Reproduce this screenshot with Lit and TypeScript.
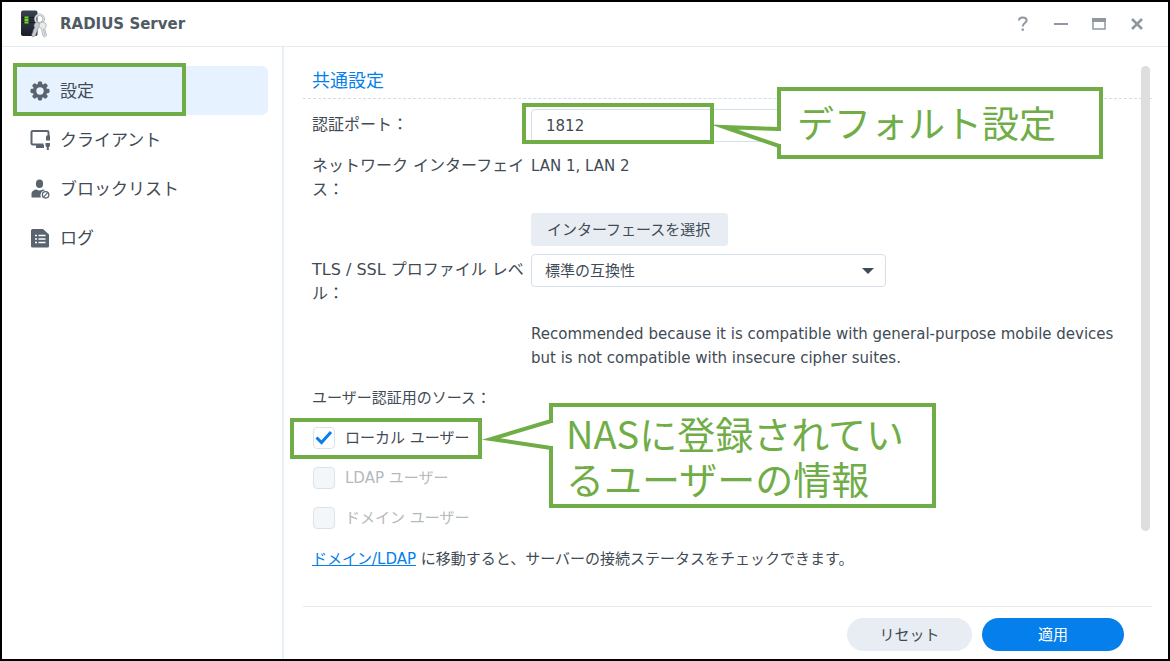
import { LitElement, html, css, svg } from "lit";
import { customElement, property, state } from "lit/decorators.js";
import { classMap } from "lit/directives/class-map.js";

const icons = {
  gear: svg`<svg viewBox="0 0 20 20" width="20" height="20" aria-hidden="true">
    <g fill="#5a646e">
      <rect x="7.8" y="0.5" width="4.4" height="19" rx="1.4"/>
      <rect x="7.8" y="0.5" width="4.4" height="19" rx="1.4" transform="rotate(45 10 10)"/>
      <rect x="7.8" y="0.5" width="4.4" height="19" rx="1.4" transform="rotate(90 10 10)"/>
      <rect x="7.8" y="0.5" width="4.4" height="19" rx="1.4" transform="rotate(135 10 10)"/>
      <circle cx="10" cy="10" r="7.2"/>
    </g>
    <circle cx="10" cy="10" r="3.7" fill="#e6f2ff"/>
  </svg>`,
  client: svg`<svg viewBox="0 0 20 20" width="20" height="20" aria-hidden="true">
    <path d="M13.500 14.500H2.800a1.300 1.300 0 0 1-1.300-1.300V2.300A1.300 1.300 0 0 1 2.800 1h14.400a1.300 1.300 0 0 1 1.300 1.300V6" fill="none" stroke="#5a646e" stroke-width="2"/>
    <path d="M6 15h8v3H6zM16.500 5.500H20v5h-4V7zM15.500 13h4.500v3l-1.200 1.200V20h-2v-2.800L15.500 16z" fill="#5a646e"/>
  </svg>`,
  block: svg`<svg viewBox="0 0 20 20" width="20" height="20" aria-hidden="true">
    <ellipse cx="9.500" cy="4.800" rx="3.600" ry="4.300" fill="#5a646e"/>
    <path d="M1.500 18.500v-3.500c0-3 3-4.500 5-4.500 1.800 1.200 4.400 1.200 6 0 1 .1 1.900.4 2.700.8a5 5 0 0 0-4.300 7.200z" fill="#5a646e"/>
    <circle cx="15.600" cy="15.800" r="3.200" fill="none" stroke="#5a646e" stroke-width="1.300"/>
    <path d="M13.600 17.800l4-4" stroke="#5a646e" stroke-width="1.200"/>
  </svg>`,
  log: svg`<svg viewBox="0 0 20 20" width="20" height="20" aria-hidden="true">
    <path d="M2.500 1h10.500l6 5.500v11.500a1.500 1.500 0 0 1-1.500 1.500h-15A1.500 1.500 0 0 1 1 18V2.500A1.500 1.500 0 0 1 2.500 1z" fill="#5a646e"/>
    <path d="M5 7.500h2M5 11h2M5 14.500h2M8.500 7.500h7M8.500 11h7M8.500 14.500h7" stroke="#fff" stroke-width="1.400"/>
  </svg>`,
};

const appIcon = svg`<svg viewBox="0 0 28 28" width="28" height="28" aria-hidden="true">
  <defs>
    <linearGradient id="case" x1="0" y1="0" x2="0" y2="1">
      <stop offset="0" stop-color="#3a4150"/><stop offset="1" stop-color="#191e29"/>
    </linearGradient>
  </defs>
  <rect x="1" y="0.500" width="16.500" height="25.500" rx="2" fill="url(#case)"/>
  <path d="M2 7.500h14.500M2 10h14.500M2 12.500h14.500" stroke="#171b24"/>
  <path d="M4.500 7.500h4M4.500 10h4M4.500 12.500h4" stroke="#6fdc25" stroke-width="2"/>
  <circle cx="19.500" cy="9" r="4.200" fill="none" stroke="#9a9fa4" stroke-width="2.400"/>
  <circle cx="19.500" cy="9" r="4.200" fill="none" stroke="#dcdee0" stroke-width="1.400"/>
  <path d="M15 13.200c1.500-1.500 4.500-1 5 1 .4 1.800-.5 3-1.600 3.600L15.200 26l-2.700.8-.7-2.300 1-2 .4-2 1.500-3c-.9-1.200-.8-3 .3-4.300z" fill="#c9ccd0" stroke="#858b91" stroke-width=".6"/>
  <path d="M20.800 12.500c2-1 4.800-.2 5.300 2 .4 1.600-.3 3-1.300 3.800l1.700 7.200-1.900 1.600-1.600-1.300-1.600-7.300c-1.600-.4-2.400-1.600-2.300-3.200.1-1.200.7-2.200 1.700-2.800z" fill="#e9eaec" stroke="#8d9298" stroke-width=".6"/>
  <path d="M23.300 18.500l1.500 7" stroke="#a9aeb3" stroke-width=".8"/>
</svg>`;

@customElement("callout-note")
class CalloutNote extends LitElement {
  @property({ type: Number }) tipX = 0;
  @property({ type: Number }) tipY = 0;
  @property({ type: Number }) topY = 0;
  @property({ type: Number }) bottomY = 0;

  static styles = css`
    :host {
      display: block;
      box-sizing: border-box;
      border: 4px solid #70ad47;
      background: #fff;
      color: #70ad47;
      font-family: "Noto Sans CJK JP", sans-serif;
      line-height: 45px;
    }
    .tail {
      position: absolute;
      left: -72px;
      top: -4px;
      width: 72px;
      height: 100px;
      overflow: visible;
    }
    .fill { fill: #fff; }
    .edge { fill: none; stroke: #70ad47; stroke-width: 4; }
  `;

  render() {
    const { tipX, tipY, topY, bottomY } = this;
    return html`
      <svg class="tail" aria-hidden="true">
        <polygon class="fill" points="73,${topY} 73,${bottomY} ${tipX},${tipY}"></polygon>
        <polyline class="edge" stroke-miterlimit="12" points="72,${topY} 70,${topY} ${tipX},${tipY} 70,${bottomY} 72,${bottomY}"></polyline>
      </svg>
      <slot></slot>
    `;
  }
}

@customElement("app-root")
class AppRoot extends LitElement {
  @state() private active = "settings";

  private nav = [
    { id: "settings", label: "設定", icon: icons.gear },
    { id: "clients", label: "クライアント", icon: icons.client },
    { id: "block", label: "ブロックリスト", icon: icons.block },
    { id: "log", label: "ログ", icon: icons.log },
  ];

  private sources = [
    { id: "local", label: "ローカル ユーザー", on: true },
    { id: "ldap", label: "LDAP ユーザー", on: false },
    { id: "domain", label: "ドメイン ユーザー", on: false },
  ];

  static styles = css`
    :host {
      display: block;
      font: 15px/24px "DejaVu Sans", "Noto Sans CJK JP", sans-serif;
      color: #414b55;
    }
    * { box-sizing: border-box; }
    button, input, select { font: inherit; color: inherit; margin: 0; }
    .window {
      display: grid;
      grid-template: auto 1fr / 282px minmax(0, 1fr);
      min-height: 100vh;
      border: 2px solid #000;
      background: #fff;
    }
    .titlebar {
      grid-column: 1 / -1;
      display: flex;
      align-items: center;
      height: 45px;
      padding: 0 17px 0 18px;
      border-bottom: 1px solid #e3eaf0;
    }
    .title { flex: 1; margin: 0 0 0 12px; font-size: 15px; font-weight: bold; color: #505a64; }
    .controls { display: flex; gap: 10px; }
    .control {
      display: grid;
      place-items: center;
      width: 28px;
      height: 28px;
      padding: 0;
      border: 0;
      background: none;
      color: #8f98a1;
    }
    .sidebar { padding: 19px 14px 0 11px; border-right: 2px solid #e8eff5; }
    .nav-item {
      position: relative;
      display: flex;
      align-items: center;
      gap: 10px;
      width: 100%;
      height: 49px;
      padding: 0 17px;
      border: 0;
      border-radius: 6px;
      background: none;
      font-size: 17px;
      text-align: left;
    }
    .nav-item.active { background: #e6f2ff; }
    .ring { position: absolute; border: 4px solid #70ad47; pointer-events: none; }
    .ring-nav { left: 0; top: -3px; width: 173px; height: 53px; }
    .ring-port { left: -9px; top: -6px; width: 192px; height: 41px; }
    .ring-local { left: -23px; top: -8px; width: 192px; height: 41px; }
    .panel { display: flex; flex-direction: column; padding: 19px 16px 0 19px; }
    .body { position: relative; flex: 1; }
    .thumb {
      position: absolute;
      right: 2px;
      top: 0;
      width: 9px;
      height: 465px;
      border-radius: 5px;
      background: #dedede;
    }
    .heading {
      margin: 0 0 10px;
      padding: 3px 9px 5px;
      border-bottom: 1px dashed #cfdde9;
      font-size: 18px;
      font-weight: normal;
      color: #057feb;
    }
    .form { padding: 0 26px 0 9px; }
    .row {
      display: grid;
      grid-template-columns: 219px minmax(0, 1fr);
      align-items: start;
    }
    .row-network { margin-top: 12px; }
    .row-tls { margin-top: 8px; }
    .label { padding: 4px 0; font-size: 16px; }
    .row-network .label { padding: 0 0 11px; }
    .field { position: relative; width: 355px; }
    .input, .select {
      display: block;
      width: 100%;
      height: 33px;
      padding: 0 14px;
      border: 1px solid #d5e0ea;
      border-radius: 4px;
      background: #fff;
      appearance: none;
      outline: none;
    }
    .select { padding: 0 13px; }
    .arrow { position: absolute; right: 12px; top: 14px; pointer-events: none; }
    .pick {
      grid-column: 2;
      justify-self: start;
      height: 33px;
      padding: 0 18px 0 16px;
      border: 0;
      border-radius: 3px;
      background: #e8edf3;
    }
    .hint { grid-column: 2; margin: 12px 0 0; }
    .sources { margin: 16px 0 0; padding: 0; border: 0; }
    .legend { padding: 0; }
    .check {
      position: relative;
      display: flex;
      width: max-content;
      align-items: center;
      gap: 10px;
      height: 24px;
      margin: 16px 0 0 1px;
    }
    .check.off { color: #b4b9be; }
    .box {
      display: grid;
      place-items: center;
      appearance: none;
      width: 22px;
      height: 22px;
      border: 1px solid #d9e3ed;
      border-radius: 4px;
      background: #fff;
    }
    .box:disabled { background: #f4f7fa; }
    .tick { position: absolute; left: 2px; top: 4px; pointer-events: none; }
    .note { margin: 17px 0 0; }
    .link { color: #057feb; text-decoration: underline; }
    .callout { position: absolute; z-index: 2; }
    .callout-port { left: 246px; top: -22px; width: 326px; height: 72px; padding: 9px 16px; font-size: 37px; }
    .callout-local { left: 236px; top: -23px; width: 387px; height: 105px; padding: 3px 13px; font-size: 38px; }
    .footer {
      display: flex;
      justify-content: flex-end;
      gap: 10px;
      padding: 11px 28px 8px 0;
      border-top: 1px solid #e3eaf0;
    }
    .pill { height: 33px; border: 0; border-radius: 17px; }
    .reset { width: 125px; background: #e8edf3; }
    .apply { width: 142px; background: #057feb; color: #fff; }
  `;

  render() {
    return html`
      <div class="window">
        <header class="titlebar">
          ${appIcon}
          <h1 class="title">RADIUS Server</h1>
          <div class="controls">
            <button class="control" aria-label="ヘルプ">
              <svg width="12" height="16" viewBox="0 0 12 16"><path d="M2 4.500C2 2.500 3.700 1.500 5.700 1.500S9.600 2.600 9.600 4.500C9.600 7 5.700 7.200 5.700 10.500" fill="none" stroke="currentColor" stroke-width="2"/><path d="M4.600 12.500h2.300v2.300H4.600z" fill="currentColor"/></svg>
            </button>
            <button class="control" aria-label="最小化">
              <svg width="14" height="14"><path d="M0 7h14" stroke="currentColor" stroke-width="2"/></svg>
            </button>
            <button class="control" aria-label="最大化">
              <svg width="14" height="12"><path d="M1 1h12v10H1z" fill="none" stroke="currentColor" stroke-width="1.500"/><path d="M0 0h14v4H0z" fill="currentColor"/></svg>
            </button>
            <button class="control" aria-label="閉じる">
              <svg width="12" height="12"><path d="M1 1l10 10M11 1L1 11" stroke="currentColor" stroke-width="2.600"/></svg>
            </button>
          </div>
        </header>

        <nav class="sidebar">
          ${this.nav.map(
            (n) => html`<button
              class=${classMap({ "nav-item": true, active: n.id === this.active })}
              @click=${() => (this.active = n.id)}
            >
              ${n.icon}<span>${n.label}</span>
              ${n.id === "settings" ? html`<span class="ring ring-nav"></span>` : ""}
            </button>`
          )}
        </nav>

        <main class="panel">
          <div class="body">
            <h2 class="heading">共通設定</h2>
            <div class="form">
              <div class="row">
                <label class="label" for="port">認証ポート：</label>
                <div class="field">
                  <input class="input" id="port" type="text" value="1812" />
                  <span class="ring ring-port"></span>
                  <callout-note class="callout callout-port" .tipX=${15} .tipY=${40} .topY=${42} .bottomY=${59}>デフォルト設定</callout-note>
                </div>
              </div>
              <div class="row row-network">
                <span class="label">ネットワーク インターフェイス：</span>
                <span>LAN 1, LAN 2</span>
                <button class="pick">インターフェースを選択</button>
              </div>
              <div class="row row-tls">
                <label class="label" for="tls">TLS / SSL プロファイル レベル：</label>
                <div class="field">
                  <select class="select" id="tls"><option>標準の互換性</option></select>
                  <svg class="arrow" width="12" height="6"><path d="M0 0h12L6 6z" fill="#414b55"/></svg>
                </div>
                <p class="hint">Recommended because it is compatible with general-purpose mobile devices but is not compatible with insecure cipher suites.</p>
              </div>
              <fieldset class="sources">
                <legend class="legend">ユーザー認証用のソース：</legend>
                ${this.sources.map(
                  (s) => html`<label class=${classMap({ check: true, off: !s.on })}>
                    <input class="box" type="checkbox" .checked=${s.on} ?disabled=${!s.on} />
                    <span>${s.label}</span>
                    ${s.on
                      ? html`<svg class="tick" width="18" height="15"><path d="M1.500 7.500l5 5 9.500-10.500" fill="none" stroke="#057feb" stroke-width="3"/></svg>
                          <span class="ring ring-local"></span>
                          <callout-note class="callout callout-local" .tipX=${10} .tipY=${36} .topY=${18} .bottomY=${45}>NASに登録されているユーザーの情報</callout-note>`
                      : ""}
                  </label>`
                )}
              </fieldset>
              <p class="note"><a class="link" href="#domain">ドメイン/LDAP</a> に移動すると、サーバーの接続ステータスをチェックできます。</p>
            </div>
            <div class="thumb"></div>
          </div>
          <footer class="footer">
            <button class="pill reset">リセット</button>
            <button class="pill apply">適用</button>
          </footer>
        </main>
      </div>
    `;
  }
}
